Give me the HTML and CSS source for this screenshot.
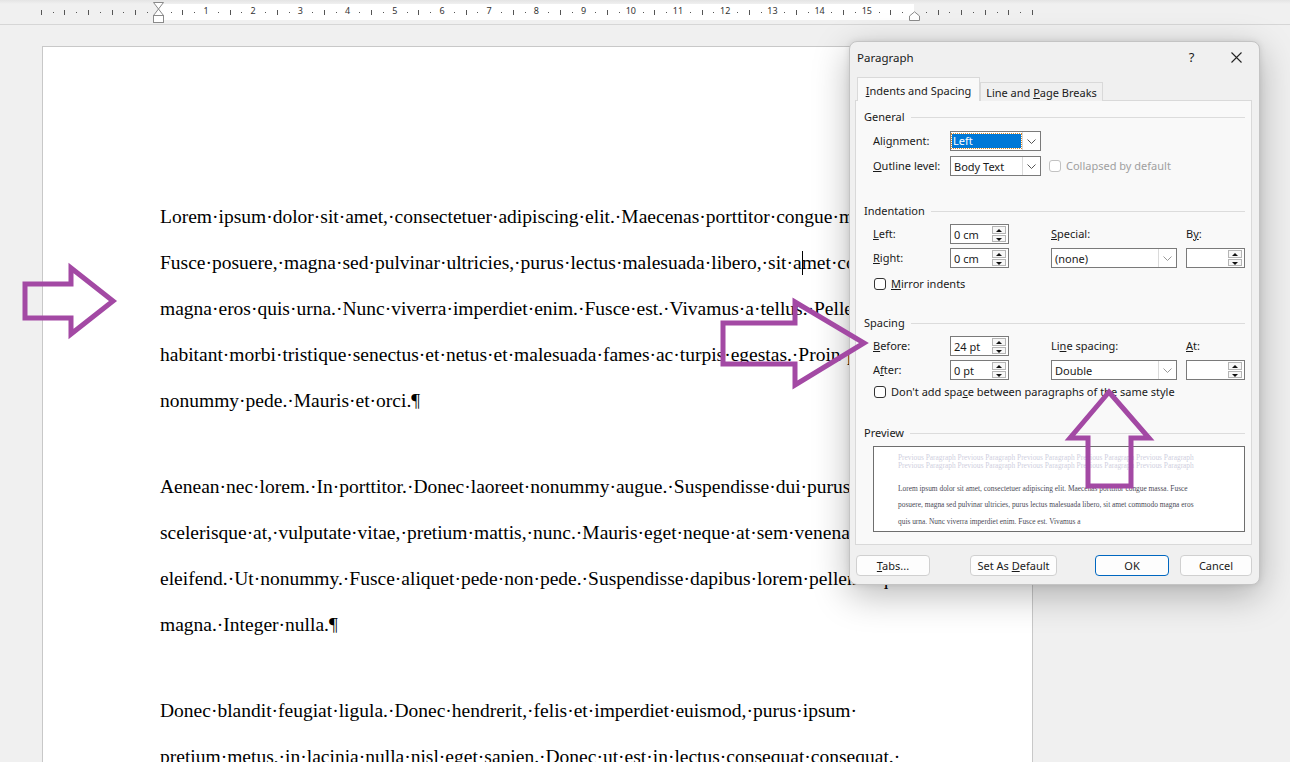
FILE: index.html
```html
<!DOCTYPE html>
<html lang="en">
<head>
    <meta charset="UTF-8">
    <title>Paragraph</title>
    <link rel="stylesheet" href="styles.css">
</head>
<body>
    <div class="ruler">
        <div class="ruler-band"></div>
        <div class="ruler-ticks" id="ticks"></div>
        <svg class="marker-left" width="13" height="22" viewBox="0 0 13 22">
            <path d="M1.5 0.5 H11.5 L6.5 7 Z" fill="#fff" stroke="#8a8a8a"/>
            <path d="M6.5 7 L11.5 13.5 H1.5 Z" fill="#fff" stroke="#8a8a8a"/>
            <rect x="1.5" y="13.5" width="10" height="7" fill="#fff" stroke="#8a8a8a"/>
        </svg>
        <svg class="marker-right" width="13" height="10" viewBox="0 0 13 10">
            <path d="M1.5 9.5 V5 L6.5 0.8 L11.5 5 V9.5 Z" fill="#fff" stroke="#8a8a8a"/>
        </svg>
    </div>

    <div class="workspace">
        <div class="page">
            <p class="para">
                <span class="line">Lorem·ipsum·dolor·sit·amet,·consectetuer·adipiscing·elit.·Maecenas·porttitor·congue·massa.·</span>
                <span class="line">Fusce·posuere,·magna·sed·pulvinar·ultricies,·purus·lectus·malesuada·libero,·sit·a<i class="caret"></i>met·commodo·</span>
                <span class="line">magna·eros·quis·urna.·Nunc·viverra·imperdiet·enim.·Fusce·est.·Vivamus·a·tellus.·Pellentesque·</span>
                <span class="line">habitant·morbi·tristique·senectus·et·netus·et·malesuada·fames·ac·turpis·egestas.·Proin·pharetra·</span>
                <span class="line">nonummy·pede.·Mauris·et·orci.¶</span>
            </p>
            <p class="para">
                <span class="line">Aenean·nec·lorem.·In·porttitor.·Donec·laoreet·nonummy·augue.·Suspendisse·dui·purus,·</span>
                <span class="line">scelerisque·at,·vulputate·vitae,·pretium·mattis,·nunc.·Mauris·eget·neque·at·sem·venenatis·</span>
                <span class="line">eleifend.·Ut·nonummy.·Fusce·aliquet·pede·non·pede.·Suspendisse·dapibus·lorem·pellentesque·</span>
                <span class="line">magna.·Integer·nulla.¶</span>
            </p>
            <p class="para">
                <span class="line">Donec·blandit·feugiat·ligula.·Donec·hendrerit,·felis·et·imperdiet·euismod,·purus·ipsum·</span>
                <span class="line">pretium·metus,·in·lacinia·nulla·nisl·eget·sapien.·Donec·ut·est·in·lectus·consequat·consequat.·</span>
            </p>
        </div>
    </div>

    <div class="dialog">
        <div class="titlebar">
            <span class="title">Paragraph</span>
            <span class="cap-btn">?</span>
            <span class="cap-btn">
                <svg width="11" height="11" viewBox="0 0 11 11"><path d="M0.5 0.5 L10.5 10.5 M10.5 0.5 L0.5 10.5" stroke="#222" stroke-width="1.1"/></svg>
            </span>
        </div>
        <div class="tabs">
            <span class="tab active"><u>I</u>ndents and Spacing</span>
            <span class="tab">Line and <u>P</u>age Breaks</span>
        </div>
        <div class="panel">
            <div class="group-title">General</div>
            <div class="form general">
                <label>Ali<u>g</u>nment:</label>
                <div class="combo w91">
                    <span class="val"><span class="selected">Left</span></span>
                    <span class="drop"><svg width="9" height="5" viewBox="0 0 9 5"><path d="M0.5 0.5 L4.5 4.5 L8.5 0.5" fill="none" stroke="#555"/></svg></span>
                </div>
                <span></span><span></span>
                <label><u>O</u>utline level:</label>
                <div class="combo w91">
                    <span class="val">Body Text</span>
                    <span class="drop"><svg width="9" height="5" viewBox="0 0 9 5"><path d="M0.5 0.5 L4.5 4.5 L8.5 0.5" fill="none" stroke="#555"/></svg></span>
                </div>
                <div class="check disabled span2"><i class="box"></i><span>Collapsed by default</span></div>
            </div>

            <div class="group-title gap-big">Indentation</div>
            <div class="form">
                <label><u>L</u>eft:</label>
                <div class="spin"><span class="val">0 cm</span><span class="spin-btns"><i class="up"></i><i class="down"></i></span></div>
                <label><u>S</u>pecial:</label>
                <label>B<u>y</u>:</label>
                <label><u>R</u>ight:</label>
                <div class="spin"><span class="val">0 cm</span><span class="spin-btns"><i class="up"></i><i class="down"></i></span></div>
                <div class="combo w126">
                    <span class="val">(none)</span>
                    <span class="drop"><svg width="9" height="5" viewBox="0 0 9 5"><path d="M0.5 0.5 L4.5 4.5 L8.5 0.5" fill="none" stroke="#999"/></svg></span>
                </div>
                <div class="spin"><span class="val"></span><span class="spin-btns"><i class="up"></i><i class="down"></i></span></div>
            </div>
            <div class="check row-check"><i class="box"></i><span><u>M</u>irror indents</span></div>

            <div class="group-title gap-mid">Spacing</div>
            <div class="form">
                <label><u>B</u>efore:</label>
                <div class="spin"><span class="val">24 pt</span><span class="spin-btns"><i class="up"></i><i class="down"></i></span></div>
                <label>Li<u>n</u>e spacing:</label>
                <label><u>A</u>t:</label>
                <label>A<u>f</u>ter:</label>
                <div class="spin"><span class="val">0 pt</span><span class="spin-btns"><i class="up"></i><i class="down"></i></span></div>
                <div class="combo w126">
                    <span class="val">Double</span>
                    <span class="drop"><svg width="9" height="5" viewBox="0 0 9 5"><path d="M0.5 0.5 L4.5 4.5 L8.5 0.5" fill="none" stroke="#999"/></svg></span>
                </div>
                <div class="spin"><span class="val"></span><span class="spin-btns"><i class="up"></i><i class="down"></i></span></div>
            </div>
            <div class="check row-check tight"><i class="box"></i><span>Don't add spa<u>c</u>e between paragraphs of the same style</span></div>

            <div class="group-title gap-prev">Preview</div>
            <div class="preview">
                <div class="prev-text">Previous Paragraph Previous Paragraph Previous Paragraph Previous Paragraph Previous Paragraph<br>Previous Paragraph Previous Paragraph Previous Paragraph Previous Paragraph Previous Paragraph</div>
                <div class="cur-text">Lorem ipsum dolor sit amet, consectetuer adipiscing elit. Maecenas porttitor congue massa. Fusce<br>posuere, magna sed pulvinar ultricies, purus lectus malesuada libero, sit amet commodo magna eros<br>quis urna. Nunc viverra imperdiet enim. Fusce est. Vivamus a</div>
            </div>
        </div>
        <div class="buttons">
            <span class="btn w74"><u>T</u>abs...</span>
            <span class="btn w87 push">Set As <u>D</u>efault</span>
            <span class="btn w74 primary">OK</span>
            <span class="btn w72">Cancel</span>
        </div>
    </div>

    <svg class="arrows" width="1290" height="762" viewBox="0 0 1290 762">
        <polygon points="25,284 71,284 71,268 113,301 71,334 71,318 25,318" />
        <polygon points="723,323 795,323 795,302 864,343 795,385 795,364 723,364" />
        <polygon points="1109,392 1149,438 1131,438 1131,486 1088,486 1088,438 1070,438" />
    </svg>

    <script>
        // ruler: quarter-centimetre marks, numbers on whole cm inside the text area
        const ticks = document.getElementById('ticks');
        const zero = 158.8, cm = 47.2;
        for (let q = -10; q <= 74; q++) {
            if (q === 0 || q === 64) continue;
            const el = document.createElement('span');
            if (q % 4 === 0 && q > 0 && q < 64) {
                el.className = 'num';
                el.textContent = q / 4;
            } else if (q % 2 === 0) {
                el.className = 'tick';
            } else {
                el.className = 'dot';
            }
            el.style.left = (zero + q * cm / 4) + 'px';
            ticks.appendChild(el);
        }
    </script>
</body>
</html>
```

FILE: styles.css
```css
body { margin: 0; background: #f0f0f0; font-family: "Noto Sans", "Open Sans", sans-serif; overflow: hidden; width: 1290px; height: 762px; position: relative; }

/* ruler */
.ruler { position: relative; height: 24px; border-bottom: 1px solid #d6d6d6; background: linear-gradient(#e4e4e4, #f0f0f0 4px); }
.ruler-band { position: absolute; left: 159px; width: 755px; top: 4px; height: 16px; background: #fff; }
.ruler-ticks { position: absolute; left: 0; top: 0; right: 0; height: 24px; }
.ruler-ticks span { position: absolute; }
.tick { top: 10px; width: 1px; height: 5px; background: #555; }
.dot { top: 12px; width: 1px; height: 1px; background: #555; }
.num { top: 5px; font-size: 9px; line-height: 12px; color: #333; transform: translateX(-50%); font-family: "Noto Sans", sans-serif; }
.marker-left { position: absolute; left: 152px; top: 2px; }
.marker-right { position: absolute; left: 908px; top: 11px; }

/* document */
.workspace { padding: 21px 0 0 42px; }
.page { width: 991px; height: 900px; background: #fff; border: 1px solid #c8c8c8; padding: 147px 0 0 117px; box-sizing: border-box; }
.para { margin: 0 0 40px; font-family: "Liberation Serif", "Times New Roman", serif; font-size: 19.5px; line-height: 46px; color: #000; }
.line { display: block; white-space: nowrap; }
.caret { display: inline-block; width: 1px; height: 24px; background: #000; vertical-align: -6px; margin-right: -1px; }

/* dialog */
.dialog { position: absolute; left: 849px; top: 41px; width: 411px; height: 544px; box-sizing: border-box; background: #f0f0f0; border: 1px solid #c4c4c4; border-radius: 8px; box-shadow: 0 10px 36px rgba(0, 0, 0, 0.28), 0 0 6px rgba(0, 0, 0, 0.1); font-size: 11px; color: #1a1a1a; padding: 0 7px 0 5px; }
.titlebar { display: flex; align-items: center; height: 30px; margin-right: -7px; }
.title { flex: 1; padding-left: 2px; font-size: 11.5px; }
.cap-btn { width: 45px; height: 30px; display: flex; align-items: center; justify-content: center; font-size: 13px; }
.tabs { display: flex; align-items: flex-end; height: 29px; padding-left: 2px; position: relative; z-index: 1; margin-bottom: -1px; }
.tab { display: block; width: 123px; height: 19px; line-height: 19px; box-sizing: border-box; border: 1px solid #d9d9d9; border-bottom: none; background: #f0f0f0; text-align: center; white-space: nowrap; }
.tab.active { height: 24px; line-height: 26px; background: #f9f9f9; }
.panel { height: 445px; box-sizing: border-box; background: #f9f9f9; border: 1px solid #d9d9d9; padding: 9px 6px 0 8px; }

.group-title { display: flex; align-items: center; height: 14px; line-height: 14px; }
.group-title::after { content: ""; flex: 1; border-top: 1px solid #dcdcdc; margin-left: 6px; }
.gap-big { margin-top: 28px; }
.gap-mid { margin-top: 25px; }
.gap-prev { margin-top: 27px; }

.form { display: grid; grid-template-columns: 77px 101px 135px 59px; grid-auto-rows: 20px; row-gap: 4px; margin: 6px 0 0 9px; align-items: center; }
.form.general { margin-top: 7px; row-gap: 5px; }
.form label { white-space: nowrap; line-height: 14px; }
.span2 { grid-column: span 2; }

.combo, .spin { height: 20px; box-sizing: border-box; border: 1px solid #7a7a7a; background: #fff; display: flex; align-items: stretch; }
.w91 { width: 91px; }
.w126 { width: 126px; }
.combo .val, .spin .val { flex: 1; display: flex; align-items: center; padding-left: 3px; white-space: nowrap; }
.selected { background: #0078d7; color: #fff; outline: 1px dotted #d98a2b; width: 68px; height: 14px; line-height: 14px; padding-left: 1px; margin-left: -2px; }
.drop { width: 17px; display: flex; align-items: center; justify-content: center; border-left: 1px solid #dadada; }
.spin { width: 59px; }
.spin-btns { width: 14px; display: flex; flex-direction: column; justify-content: center; gap: 1px; padding: 1px 2px 1px 0; }
.spin-btns i { display: block; height: 7px; border: 1px solid #b5b5b5; background: #f7f7f7; position: relative; }
.spin-btns i::after { content: ""; position: absolute; left: 3px; top: 2px; border-left: 3px solid transparent; border-right: 3px solid transparent; }
.spin-btns .up::after { border-bottom: 3px solid #111; }
.spin-btns .down::after { border-top: 3px solid #111; }

.check { display: flex; align-items: center; white-space: nowrap; line-height: 14px; }
.check .box { width: 12px; height: 12px; box-sizing: border-box; border: 1px solid #333; border-radius: 3px; background: #fff; margin-right: 5px; }
.check.disabled { color: #a0a0a0; margin-left: -2px; }
.check.disabled .box { border-color: #c2c2c2; }
.row-check { margin: 9px 0 0 10px; height: 14px; }
.row-check.tight { margin-top: 5px; }

.preview { margin: 6px 0 0 9px; width: 372px; height: 86px; box-sizing: border-box; background: #fff; border: 1px solid #6e6e6e; padding: 7px 0 0 24px; font-family: "Liberation Serif", "Times New Roman", serif; font-size: 7.4px; white-space: nowrap; }
.prev-text { line-height: 8px; color: #cfcfe0; }
.cur-text { margin-top: 11px; line-height: 16.4px; color: #4c4c58; }

.buttons { display: flex; margin-top: 10px; padding-left: 1px; }
.btn { display: block; height: 21px; line-height: 19px; box-sizing: border-box; border: 1px solid #d0d0d0; border-radius: 4px; background: #fdfdfd; text-align: center; white-space: nowrap; }
.w74 { width: 74px; }
.w87 { width: 87px; margin-left: 40px; }
.w72 { width: 72px; margin-left: 11px; }
.push { margin-right: auto; }
.btn.primary { border-color: #0067c0; }

/* annotation arrows */
.arrows { position: absolute; left: 0; top: 0; pointer-events: none; }
.arrows polygon { fill: none; stroke: #a349a4; stroke-width: 5; stroke-linejoin: miter; }
```
